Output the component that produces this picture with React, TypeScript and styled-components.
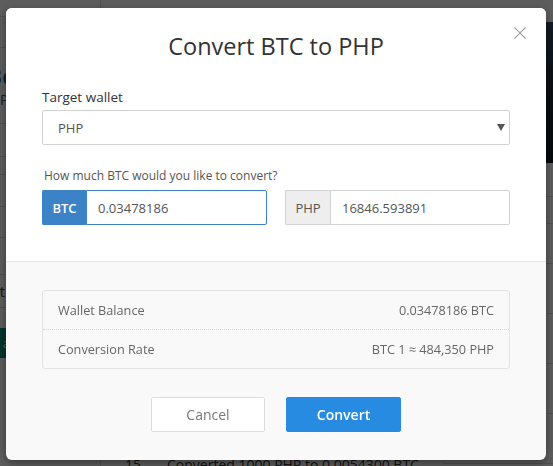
import styled, { createGlobalStyle } from "styled-components";

const GlobalStyle = createGlobalStyle`
  html, body {
    margin: 0;
    padding: 0;
  }
  body {
    width: 553px;
    height: 466px;
    overflow: hidden;
    background: #fff;
    font-family: "Open Sans", "Liberation Sans", sans-serif;
  }
  * {
    box-sizing: border-box;
  }
`;

const leftRows = [17, 31, 76, 33, 18, 32, 31, 37, 33];
const rightRows = [34, 27, 40, 50, 50, 50, 50];

const App = () => {
  return (
    <>
      <GlobalStyle />
      <Page>
        <LeftCol>
          {leftRows.map((h, i) => (
            <SideRow key={i} $height={h}>
              {i === 2 && (
                <>
                  <BigName>Bc</BigName>
                  <SubName>P</SubName>
                </>
              )}
              {i === 8 && <SideText>rt</SideText>}
            </SideRow>
          ))}
          <TealButton>a</TealButton>
        </LeftCol>
        <CenterCol>
          <HistoryRow>
            <HistoryNum>15</HistoryNum>
            <HistoryText>Converted 1000 PHP to 0.0054300 BTC</HistoryText>
          </HistoryRow>
        </CenterCol>
        <RightCol>
          <Banner />
          {rightRows.map((h, i) => (
            <SideRow key={i} $height={h} />
          ))}
        </RightCol>
      </Page>
      <Overlay />
      <Modal>
        <ModalBody>
          <CloseButton aria-label="Close">
            <svg width="12" height="12" viewBox="0 0 12 12">
              <path
                d="M0.5 0.5 L11.5 11.5 M11.5 0.5 L0.5 11.5"
                stroke="#a0a0a0"
                strokeWidth="1.1"
                fill="none"
              />
            </svg>
          </CloseButton>
          <Title>Convert BTC to PHP</Title>
          <FieldLabel>Target wallet</FieldLabel>
          <SelectBox>
            <span>PHP</span>
            <svg width="8" height="7" viewBox="0 0 8 7">
              <path d="M0 0 H8 L4 7 Z" fill="#555" />
            </svg>
          </SelectBox>
          <Question>How much BTC would you like to convert?</Question>
          <GroupRow>
            <InputGroup>
              <Addon $active>BTC</Addon>
              <AmountInput $active defaultValue="0.03478186" readOnly />
            </InputGroup>
            <InputGroup>
              <Addon>PHP</Addon>
              <AmountInput defaultValue="16846.593891" readOnly />
            </InputGroup>
          </GroupRow>
        </ModalBody>
        <ModalFooter>
          <InfoBox>
            <InfoRow>
              <span>Wallet Balance</span>
              <span>0.03478186 BTC</span>
            </InfoRow>
            <InfoRow>
              <span>Conversion Rate</span>
              <span>BTC 1 ≈ 484,350 PHP</span>
            </InfoRow>
          </InfoBox>
          <Actions>
            <Button>Cancel</Button>
            <Button $primary>Convert</Button>
          </Actions>
        </ModalFooter>
      </Modal>
    </>
  );
};

const Page = styled.div`
  display: grid;
  grid-template-columns: 101px 1fr 110px;
  width: 553px;
  height: 466px;
  overflow: hidden;
  background: #fff;
`;

const LeftCol = styled.div`
  display: flex;
  flex-direction: column;
  align-items: flex-start;
  border-right: 1px solid #ddd;
  overflow: hidden;
`;

const SideRow = styled.div<{ $height: number }>`
  display: flex;
  flex-direction: column;
  justify-content: center;
  flex: none;
  align-self: stretch;
  height: ${(p) => p.$height}px;
  border-bottom: 1px solid #ddd;
`;

const BigName = styled.div`
  font-size: 24px;
  font-weight: 700;
  line-height: 26px;
  color: #1d5fa8;
  margin-left: -14px;
`;

const SubName = styled.div`
  margin-top: 2px;
  font-size: 14px;
  line-height: 18px;
  color: #555;
`;

const SideText = styled.div`
  font-size: 14px;
  color: #333;
  margin-left: -6px;
`;

const TealButton = styled.div`
  margin-top: 20px;
  height: 30px;
  width: 24px;
  display: flex;
  align-items: center;
  justify-content: flex-end;
  padding-right: 14px;
  background: #0a8f73;
  color: #fff;
  font-size: 13px;
`;

const CenterCol = styled.div`
  display: flex;
  flex-direction: column;
  justify-content: flex-end;
`;

const HistoryRow = styled.div`
  display: flex;
  gap: 26px;
  padding: 0 0 0 24px;
  margin-bottom: -9px;
  font-size: 14px;
  line-height: 20px;
  color: #333;
`;

const HistoryNum = styled.span``;

const HistoryText = styled.span``;

const RightCol = styled.div`
  display: flex;
  flex-direction: column;
  padding-top: 22px;
`;

const Banner = styled.div`
  flex: none;
  height: 141px;
  background: linear-gradient(160deg, #3c5f80 0%, #1f2d3a 55%, #101820 100%);
`;

const Overlay = styled.div`
  position: fixed;
  inset: 0;
  background: rgba(0, 0, 0, 0.64);
`;

const Modal = styled.div`
  position: fixed;
  top: 8px;
  left: 6px;
  width: 540px;
  height: 452px;
  display: flex;
  flex-direction: column;
  border-radius: 6px;
  overflow: hidden;
  background: #f9f9f9;
  box-shadow: 0 3px 9px rgba(0, 0, 0, 0.4);
`;

const ModalBody = styled.div`
  position: relative;
  display: flex;
  flex-direction: column;
  padding: 23px 36px 36px;
  background: #fff;
  border-bottom: 1px solid #e5e5e5;
`;

const CloseButton = styled.button`
  position: absolute;
  top: 19px;
  right: 20px;
  padding: 0;
  border: none;
  background: none;
  line-height: 0;
  cursor: pointer;
`;

const Title = styled.h2`
  margin: 0;
  font-size: 23.5px;
  font-weight: 400;
  line-height: 30px;
  text-align: center;
  color: #333;
`;

const FieldLabel = styled.label`
  margin-top: 27px;
  font-size: 13.5px;
  font-weight: 400;
  line-height: 18px;
  color: #333;
`;

const SelectBox = styled.div`
  display: flex;
  align-items: center;
  justify-content: space-between;
  height: 35px;
  margin-top: 4px;
  padding: 0 4px 0 15px;
  border: 1px solid #d2d2d2;
  border-radius: 2px;
  font-size: 13px;
  color: #555;
`;

const Question = styled.div`
  margin-top: 22px;
  padding-left: 2px;
  font-size: 12px;
  line-height: 17px;
  color: #555;
`;

const GroupRow = styled.div`
  display: grid;
  grid-template-columns: minmax(0, 1fr) minmax(0, 1fr);
  gap: 18px;
  margin-top: 6px;
`;

const InputGroup = styled.div`
  display: flex;
  min-width: 0;
  height: 35px;
`;

const Addon = styled.div<{ $active?: boolean }>`
  display: flex;
  align-items: center;
  justify-content: center;
  flex: none;
  width: ${(p) => (p.$active ? 44 : 45)}px;
  border: 1px solid ${(p) => (p.$active ? "#3c82c7" : "#d2d2d2")};
  border-right: none;
  border-radius: 2px 0 0 2px;
  background: ${(p) => (p.$active ? "#3c82c7" : "#eee")};
  color: ${(p) => (p.$active ? "#fff" : "#555")};
  font-size: 13px;
  font-weight: ${(p) => (p.$active ? 600 : 400)};
`;

const AmountInput = styled.input<{ $active?: boolean }>`
  flex: 1;
  width: 0;
  min-width: 0;
  height: 35px;
  padding: 0 11px;
  border: 1px solid ${(p) => (p.$active ? "#3c82c7" : "#d2d2d2")};
  border-radius: 0 2px 2px 0;
  outline: none;
  background: #fff;
  font-family: inherit;
  font-size: 13px;
  color: #555;
`;

const ModalFooter = styled.div`
  flex: 1;
  display: flex;
  flex-direction: column;
  gap: 28px;
  padding: 28px 36px;
`;

const InfoBox = styled.div`
  border: 1px solid #e3e3e3;
  border-radius: 3px;
  background: #f9f9f9;
`;

const InfoRow = styled.div`
  display: flex;
  align-items: center;
  justify-content: space-between;
  height: 38px;
  padding: 0 15px;
  font-size: 12.7px;
  color: #666;
  & + & {
    height: 39px;
    border-top: 1px dotted #d6d6d6;
  }
`;

const Actions = styled.div`
  display: flex;
  justify-content: center;
  gap: 21px;
`;

const Button = styled.button<{ $primary?: boolean }>`
  width: ${(p) => (p.$primary ? 115 : 114)}px;
  height: 35px;
  border: 1px solid ${(p) => (p.$primary ? "#288be2" : "#dcdcdc")};
  border-radius: 2px;
  background: ${(p) => (p.$primary ? "#288be2" : "#fff")};
  color: ${(p) => (p.$primary ? "#fff" : "#777")};
  font-family: inherit;
  font-size: 14px;
  font-weight: ${(p) => (p.$primary ? 600 : 400)};
  cursor: pointer;
`;

export default App;
